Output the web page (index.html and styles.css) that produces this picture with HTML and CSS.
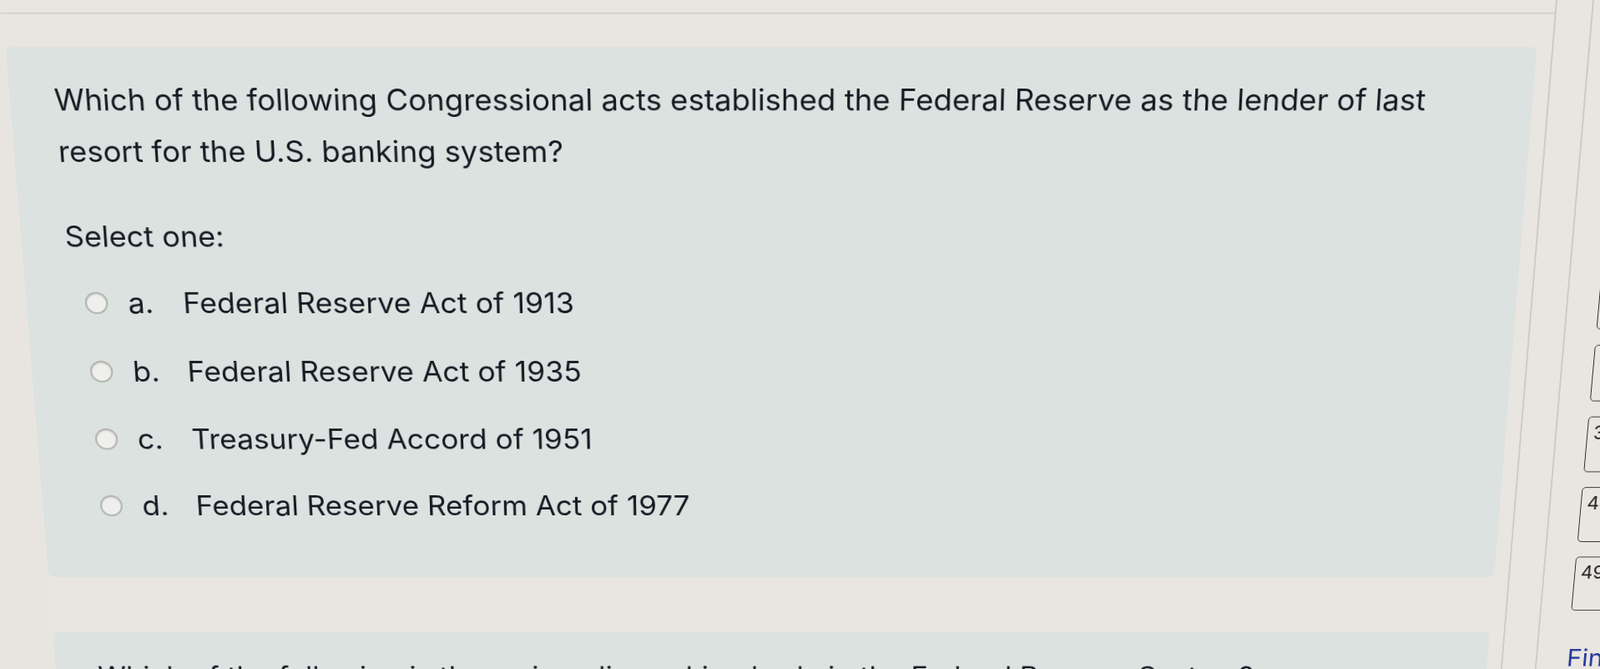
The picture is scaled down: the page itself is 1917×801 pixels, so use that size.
FILE: index.html
```html
<!DOCTYPE html>
<html lang="en">
<head>
<meta charset="utf-8">
<title>Quiz question</title>
<link rel="stylesheet" href="styles.css">
</head>
<body>
<div class="screen">
  <main class="content">
    <div class="topline"></div>
    <section class="que">
      <div class="qtext">Which of the following Congressional acts established the Federal Reserve as the lender of last resort for the U.S. banking system?</div>
      <div class="prompt">Select one:</div>
      <div class="answers">
        <div class="opt"><span class="radio"></span><span class="lbl">a.</span><span class="txt">Federal Reserve Act of 1913</span></div>
        <div class="opt"><span class="radio"></span><span class="lbl">b.</span><span class="txt">Federal Reserve Act of 1935</span></div>
        <div class="opt"><span class="radio"></span><span class="lbl">c.</span><span class="txt">Treasury-Fed Accord of 1951</span></div>
        <div class="opt"><span class="radio"></span><span class="lbl">d.</span><span class="txt">Federal Reserve Reform Act of 1977</span></div>
      </div>
    </section>
    <section class="que que2">
      <div class="qtext">Which of the following is the main policymaking body in the Federal Reserve System?</div>
    </section>
  </main>
  <aside class="side">
    <div class="navgrid">
      <div class="navbtn">13</div>
      <div class="navbtn">19</div>
      <div class="navbtn">25</div>
      <div class="navbtn">31</div>
      <div class="navbtn">37</div>
      <div class="navbtn">43</div>
      <div class="navbtn">49</div>
    </div>
    <div class="finish">Finish attempt ...</div>
  </aside>
</div>
</body>
</html>
```
FILE: styles.css
```css
html, body {
  margin: 0;
  padding: 0;
  overflow: hidden;
  background: #e8e5e0;
}
body {
  width: 1917px;
  height: 801px;
  font-family: "Inter", "Liberation Sans", sans-serif;
  color: #161922;
}
.screen {
  display: flex;
  width: 2100px;
  height: 920px;
  background: #e9e6e1;
  transform-origin: 925px 0;
  transform: perspective(1500px) rotateX(-7.5deg);
}
.content {
  width: 1844px;
  flex: none;
  padding: 15px 18px 0 2px;
  border-right: 2px solid #cdcbc6;
}
.topline {
  height: 2px;
  background: #d6d3ce;
  margin-left: -2px;
  margin-right: -18px;
}
.que {
  margin-top: 40px;
  background: #dce2df;
  border-radius: 8px;
  padding: 33px 80px 53px 54px;
}
.qtext {
  font-size: 37px;
  line-height: 63.5px;
  max-width: 1712px;
}
.prompt {
  margin-top: 44px;
  font-size: 37px;
  line-height: 64px;
}
.answers {
  margin-top: 8px;
  display: flex;
  flex-direction: column;
}
.opt {
  height: 89px;
  display: flex;
  align-items: center;
  padding-left: 19px;
  font-size: 37px;
}
.radio {
  width: 24px;
  height: 24px;
  flex: none;
  border-radius: 50%;
  border: 2px solid #b3b3b0;
  background: #efefed;
  box-shadow: inset 0 1px 2px rgba(0,0,0,0.15), 0 0 1px rgba(0,0,0,0.15);
  margin-right: 25px;
}
.lbl {
  width: 68px;
  flex: none;
}
.que2 {
  margin-top: 75px;
  padding-top: 30px;
  height: 200px;
}
.side {
  flex: none;
  margin-left: 42px;
  border-left: 2px solid #cdcbc6;
  padding-left: 38px;
  width: 200px;
}
.navgrid {
  padding-top: 150px;
  display: flex;
  flex-direction: column;
  gap: 20px;
}
.navbtn {
  width: 58px;
  height: 74px;
  border: 1.5px solid #2a2a2a;
  border-radius: 5px;
  font-size: 24px;
  line-height: 24px;
  padding: 9px 0 0 7px;
  box-sizing: border-box;
  color: #222;
}
.finish {
  margin-top: 46px;
  font-size: 33px;
  line-height: 38px;
  color: #25399a;
  white-space: nowrap;
}
```
